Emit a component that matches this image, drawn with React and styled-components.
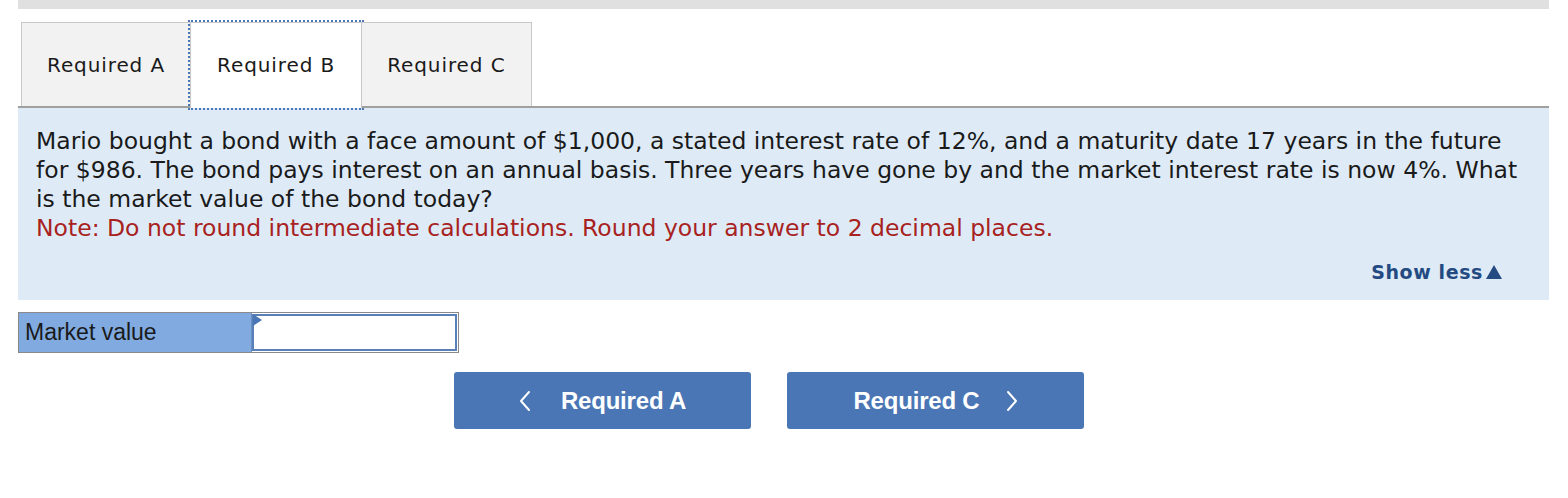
import React, { useState } from 'react';
import styled, { createGlobalStyle } from 'styled-components';

const GlobalStyle = createGlobalStyle`
  body {
    margin: 0;
    background: #ffffff;
    font-family: "DejaVu Sans", Verdana, sans-serif;
    color: #1a1a1a;
  }
`;

const Page = styled.div`
  margin: 0 19px 0 18px;
`;

const TopBar = styled.div`
  height: 9px;
  background: #e0e0e0;
`;

const TabRow = styled.div`
  display: flex;
  align-items: flex-start;
  margin-top: 13px;
  padding-left: 3px;
  height: 84px;
  position: relative;
  z-index: 1;
`;

const Tab = styled.button`
  height: ${(p) => (p.$active ? '86px' : '84px')};
  padding: ${(p) => (p.$active ? '0 26px 2px' : '0 25px')};
  border: 1px solid #c8c8c8;
  border-bottom: none;
  margin-left: -1px;
  background: ${(p) => (p.$active ? '#ffffff' : '#f2f2f2')};
  font-family: "DejaVu Sans", Verdana, sans-serif;
  font-size: 20px;
  letter-spacing: 0.9px;
  color: #1a1a1a;
  cursor: pointer;
  outline: ${(p) => (p.$active ? '2px dotted #4a76b5' : 'none')};
  outline-offset: 0;
  &:first-child {
    margin-left: 0;
  }
`;

const Panel = styled.div`
  background: #deebf7;
  border-top: 2px solid #a0a0a0;
  padding: 19px 12px 17px 18px;
`;

const Question = styled.p`
  margin: 0;
  font-size: 23.5px;
  line-height: 29px;
  color: #1a1a1a;
`;

const Note = styled.span`
  display: block;
  color: #a8221e;
`;

const ShowRow = styled.div`
  display: flex;
  justify-content: flex-end;
  margin-top: 18px;
  padding-right: 34px;
`;

const ShowLess = styled.a`
  font-size: 19px;
  letter-spacing: 0.6px;
  line-height: 22px;
  font-weight: bold;
  color: #244a82;
  cursor: pointer;
  display: flex;
  align-items: center;
  gap: 2px;
`;

const AnswerRow = styled.div`
  display: flex;
  width: 439px;
  height: 39px;
  margin-top: 12px;
  border: 1px solid #8a8a8a;
`;

const Label = styled.div`
  width: 226px;
  background: #80aae0;
  border-right: 1px solid #6a8fc0;
  padding-left: 6px;
  display: flex;
  align-items: center;
  font-family: "Liberation Sans", Arial, sans-serif;
  font-size: 23px;
  color: #1a1a1a;
`;

const InputWrap = styled.div`
  position: relative;
  flex: 1;
  padding: 1px 1px 1px 0;
  background: #ffffff;
`;

const Marker = styled.span`
  position: absolute;
  left: 1px;
  top: 1px;
  width: 0;
  height: 0;
  border-top: 6px solid transparent;
  border-bottom: 6px solid transparent;
  border-left: 9px solid #4a76b5;
`;

const Input = styled.input`
  box-sizing: border-box;
  width: 100%;
  height: 100%;
  border: 2px solid #5a80ba;
  outline: none;
  font-size: 20px;
  padding: 0 6px;
`;

const NavRow = styled.div`
  display: flex;
  gap: 36px;
  margin-top: 19px;
  padding-left: 436px;
`;

const NavButton = styled.button`
  width: 297px;
  height: 57px;
  border: none;
  border-radius: 3px;
  background: #4a76b5;
  color: #ffffff;
  font-family: "Liberation Sans", Arial, sans-serif;
  font-weight: bold;
  font-size: 24px;
  letter-spacing: -0.2px;
  display: flex;
  align-items: center;
  justify-content: center;
  gap: ${(p) => (p.$next ? '26px' : '30px')};
  cursor: pointer;
`;

const Chevron = ({ dir }) => (
  <svg width="12" height="22" viewBox="0 0 12 22" fill="none">
    <path
      d={dir === 'left' ? 'M10 2 L2 11 L10 20' : 'M2 2 L10 11 L2 20'}
      stroke="#ffffff"
      strokeWidth="2"
      strokeLinecap="round"
      strokeLinejoin="round"
    />
  </svg>
);

const tabs = ['Required A', 'Required B', 'Required C'];

export default function App() {
  const [active, setActive] = useState(1);
  const [value, setValue] = useState('');

  return (
    <Page>
      <GlobalStyle />
      <TopBar />
      <TabRow>
        {tabs.map((t, i) => (
          <Tab key={t} $active={i === active} onClick={() => setActive(i)}>
            {t}
          </Tab>
        ))}
      </TabRow>
      <Panel>
        <Question>
          Mario bought a bond with a face amount of $1,000, a stated interest rate of 12%, and a
          maturity date 17 years in the future for $986. The bond pays interest on an annual basis.
          Three years have gone by and the market interest rate is now 4%. What is the market value
          of the bond today?
          <Note>Note: Do not round intermediate calculations. Round your answer to 2 decimal places.</Note>
        </Question>
        <ShowRow>
          <ShowLess>
            Show less
            <svg width="18" height="16" viewBox="0 0 18 16">
              <path d="M9 1 L17 15 L1 15 Z" fill="#244a82" />
            </svg>
          </ShowLess>
        </ShowRow>
      </Panel>
      <AnswerRow>
        <Label>Market value</Label>
        <InputWrap>
          <Marker />
          <Input value={value} onChange={(e) => setValue(e.target.value)} />
        </InputWrap>
      </AnswerRow>
      <NavRow>
        <NavButton onClick={() => setActive(0)}>
          <Chevron dir="left" />
          Required A
        </NavButton>
        <NavButton $next onClick={() => setActive(2)}>
          Required C
          <Chevron dir="right" />
        </NavButton>
      </NavRow>
    </Page>
  );
}
